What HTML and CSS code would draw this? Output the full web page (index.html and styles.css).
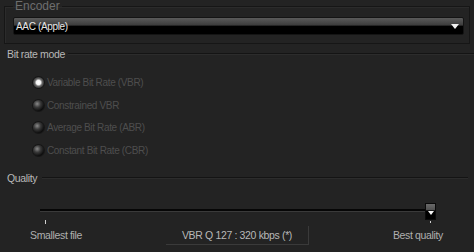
FILE: index.html
```html
<!DOCTYPE html>
<html>
<head>
<meta charset="utf-8">
<link rel="stylesheet" href="styles.css">
</head>
<body>
<div class="panel">
  <fieldset class="encoder">
    <legend class="encoder-title">Encoder</legend>
    <div class="combo">
      <span class="combo-text">AAC (Apple)</span>
      <svg class="combo-arrow" width="8" height="5" viewBox="0 0 8 5"><path d="M0 0H8L4 5Z" fill="#f0f0f0"/></svg>
    </div>
  </fieldset>

  <div class="section-head">
    <span class="section-title">Bit rate mode</span>
    <span class="section-line"></span>
  </div>
  <ul class="radios">
    <li class="radio-row"><span class="radio checked"></span><span class="radio-label">Variable Bit Rate (VBR)</span></li>
    <li class="radio-row"><span class="radio"></span><span class="radio-label">Constrained VBR</span></li>
    <li class="radio-row"><span class="radio"></span><span class="radio-label">Average Bit Rate (ABR)</span></li>
    <li class="radio-row"><span class="radio"></span><span class="radio-label">Constant Bit Rate (CBR)</span></li>
  </ul>

  <div class="section-head quality-head">
    <span class="section-title">Quality</span>
    <span class="section-line"></span>
  </div>
  <div class="slider">
    <div class="track"></div>
    <span class="tick tick-left"></span>
    <span class="thumb"><svg width="6" height="4" viewBox="0 0 6 4"><path d="M0 0H6L3 4Z" fill="#f4f4f4"/></svg></span>
    <span class="tick tick-right"></span>
  </div>
  <div class="labels">
    <span class="end-label">Smallest file</span>
    <span class="value-box">VBR Q 127 : 320 kbps (*)</span>
    <span class="end-label">Best quality</span>
  </div>
</div>
</body>
</html>
```
FILE: styles.css
```css
html, body {
  margin: 0;
  padding: 0;
  background: #232323;
}
.panel {
  width: 474px;
  height: 252px;
  font-family: "Liberation Sans", Arial, sans-serif;
  font-size: 10px;
  letter-spacing: -0.35px;
  color: #b4b4b4;
  overflow: hidden;
}
.encoder {
  margin: 0 4px 0 4px;
  padding: 5px 5px 8px 8px;
  border: 1px solid #161616;
  box-shadow: inset 1px 1px 0 #2b2b2b;
  min-width: 0;
}
.encoder-title {
  padding: 0 2px;
  margin-left: 0;
  font-size: 12px;
  letter-spacing: 0;
  color: #6e6e6e;
  line-height: 12px;
}
.combo {
  height: 18px;
  display: flex;
  align-items: center;
  justify-content: space-between;
  padding: 0 4px 0 2px;
  border: 1px solid #141414;
  border-radius: 2px;
  background: linear-gradient(#5a5a5a 0%, #3c3c3c 45%, #000 50%, #000 100%);
  box-sizing: border-box;
}
.combo-text {
  color: #e6e6e6;
  font-size: 10px;
  line-height: 17px;
}
.combo-arrow {
  display: block;
  margin-top: 1px;
}
.section-head {
  display: flex;
  align-items: center;
  margin-top: 3px;
  padding-left: 7px;
  height: 13px;
}
.section-title {
  font-size: 10.5px;
  color: #b8b8b8;
  padding-right: 3px;
}
.section-line {
  flex: 1;
  height: 1px;
  background: #141414;
  box-shadow: 0 1px 0 #2c2c2c;
  margin-top: -1px;
}
.radios {
  list-style: none;
  margin: 0;
  padding: 11px 0 0 33px;
}
.radio-row {
  display: flex;
  align-items: center;
  height: 22.7px;
}
.radio {
  width: 11px;
  height: 11px;
  border-radius: 50%;
  background: radial-gradient(circle at 38% 35%, #8a8a8a 0%, #3a3a3a 35%, #0a0a0a 75%);
  box-shadow: 0 0 0 1px #161616;
  margin-right: 3px;
}
.radio.checked {
  background: radial-gradient(circle at 50% 50%, #ffffff 0%, #f4f4f4 28%, #6a6a6a 48%, #151515 85%);
}
.radio-label {
  color: #4e4e4e;
  font-size: 10px;
}
.quality-head {
  margin-top: 10px;
}
.quality-head .section-line {
  margin-left: 2px;
  margin-right: 6px;
}
.slider {
  position: relative;
  margin: 19px 0 0 40px;
  width: 389px;
  height: 22px;
}
.track {
  position: absolute;
  left: 0;
  right: 0;
  top: 5px;
  height: 2px;
  background: #060606;
  box-shadow: 0 1px 0 #3a3a3a;
}
.tick {
  position: absolute;
  width: 1px;
  height: 4px;
  background: #d0d0d0;
  top: 16px;
}
.tick-left { left: 5px; }
.tick-right { left: 390px; height: 2px; top: 17px; }
.thumb {
  position: absolute;
  left: 385px;
  top: -1px;
  width: 11px;
  height: 17px;
  border: 1px solid #0a0a0a;
  background: linear-gradient(#6a6a6a 0%, #505050 40%, #000 45%, #000 100%);
  display: flex;
  justify-content: center;
  align-items: flex-start;
  padding-top: 7px;
  box-sizing: border-box;
}
.thumb svg { display: block; }
.labels {
  display: flex;
  justify-content: space-between;
  align-items: flex-start;
  padding: 0 31px 0 30px;
  margin-top: 1px;
}
.end-label {
  color: #b0b0b0;
  font-size: 10.5px;
  margin-top: 2px;
}
.value-box {
  width: 143px;
  height: 19px;
  line-height: 19px;
  text-align: center;
  color: #b8b8b8;
  font-size: 10.5px;
  box-sizing: border-box;
  border-right: 1px solid #3a3a3a;
  border-bottom: 1px solid #3a3a3a;
  margin-top: -1px;
}
```
